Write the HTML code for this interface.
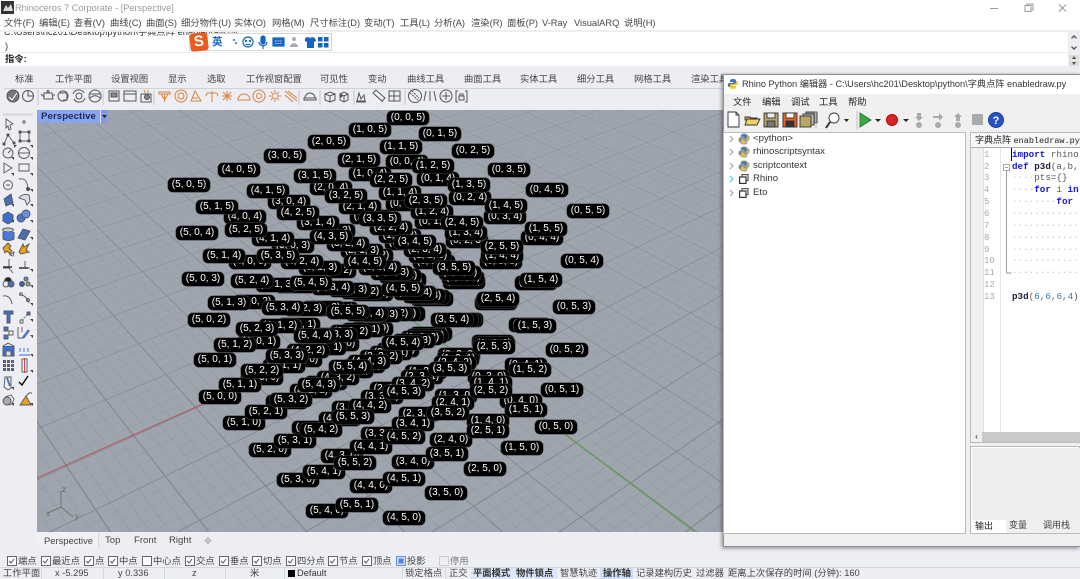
<!DOCTYPE html>
<html><head><meta charset="utf-8"><style>
html,body{margin:0;padding:0;width:1080px;height:579px;overflow:hidden}
body{position:relative;background:#eceef3;font-family:"Liberation Sans","Noto Sans CJK SC",sans-serif;color:#444}
#root{position:absolute;left:0;top:0;width:1080px;height:579px;overflow:hidden;contain:paint;filter:blur(.3px)}
.t{position:absolute;white-space:nowrap;font-size:9.3px;line-height:12px}
.t.st{line-height:11px}
.abs{position:absolute}
#vp{position:absolute;left:0;top:0;width:1080px;height:579px;clip-path:inset(110px 0 47px 37px);background:#9fa5ae;overflow:hidden}
#grid{position:absolute;left:-2200px;top:-3000px;width:3200px;height:3400px;transform-origin:2200px 3000px;
transform:matrix3d(-.4198,.07233,0,-.0002356,.1379,.0982,0,-.0002985,0,0,1,0,404,314,0,1) translate(200px,1000px);
background-image:linear-gradient(90deg,#80858d 0,#80858d 2px,transparent 2px),linear-gradient(#80858d 0,#80858d 2px,transparent 2px),linear-gradient(90deg,#8f949c 0,#8f949c 1.4px,transparent 1.4px),linear-gradient(#8f949c 0,#8f949c 1.4px,transparent 1.4px);
background-size:139px 139px,139px 139px,27.8px 27.8px,27.8px 27.8px;
background-position:54px 54px,54px 54px,26.2px 26.2px,26.2px 26.2px}
#vp b{position:absolute;width:42px;height:14px;margin:-7px 0 0 -21px;background:#000;border-radius:5px;color:#fff;font:400 10px/14px "Liberation Sans",sans-serif;text-align:center;white-space:nowrap;box-shadow:0 0 0 .5px #444}
.cb{position:absolute;top:556px;width:8px;height:8px;border:1px solid #666;background:#fff}
.code{position:absolute;left:1012px;font:9.25px/12px "Liberation Mono",monospace;color:#555;white-space:pre}
.code i{font-style:normal;color:#c3c3c3}.code u{text-decoration:none;color:#1515e0;font-weight:bold}
.ln{position:absolute;left:984px;font:9px/12px "Liberation Mono",monospace;color:#aaa}
</style></head><body><div id="root">

<div class="abs" style="left:0;top:0;width:1080px;height:30px;background:#fff"></div>
<svg class="abs" style="left:1px;top:1px" width="14" height="14"><rect width="13" height="13" fill="#333"/><path d="M2 10l3-6 2 3 3-4 2 7z" fill="#ddd"/></svg>
<div class="t" style="left:15px;top:2px;color:#9a9a9a;font-size:9.2px">Rhinoceros 7 Corporate - [Perspective]</div>
<svg class="abs" style="left:990px;top:3px" width="85" height="12" fill="none" stroke="#999"><path d="M0 5.500h8"/><rect x="35" y="2.500" width="6" height="6"/><path d="M37 2.500v-1.500h6v6h-2M69 1.500l7 7M76 1.500l-7 7"/></svg>
<div class="t" style="left:4px;top:17px">文件(F)</div><div class="t" style="left:39px;top:17px">编辑(E)</div><div class="t" style="left:74px;top:17px">查看(V)</div><div class="t" style="left:110px;top:17px">曲线(C)</div><div class="t" style="left:146px;top:17px">曲面(S)</div><div class="t" style="left:181px;top:17px">细分物件(U)</div><div class="t" style="left:234px;top:17px">实体(O)</div><div class="t" style="left:272px;top:17px">网格(M)</div><div class="t" style="left:310px;top:17px">尺寸标注(D)</div><div class="t" style="left:364px;top:17px">变动(T)</div><div class="t" style="left:400px;top:17px">工具(L)</div><div class="t" style="left:434px;top:17px">分析(A)</div><div class="t" style="left:471px;top:17px">渲染(R)</div><div class="t" style="left:507px;top:17px">面板(P)</div><div class="t" style="left:542px;top:17px">V-Ray</div><div class="t" style="left:574px;top:17px">VisualARQ</div><div class="t" style="left:624px;top:17px">说明(H)</div>

<div class="abs" style="left:0;top:30px;width:1080px;height:2px;background:#eceef3"></div>
<div class="abs" style="left:0;top:32px;width:1068px;height:20px;background:#fff;overflow:hidden"><div class="t" style="left:4px;top:-6px;color:#333">C:\Users\hc201\Desktop\python\字典点阵 enabledraw.py</div><div class="t" style="left:5px;top:8px;color:#333">)</div></div>
<div class="abs" style="left:0;top:53px;width:1068px;height:13px;background:#fff"></div>
<div class="t" style="left:5px;top:53px;color:#222;font-weight:bold">指令:</div>
<svg class="abs" style="left:1068px;top:32px" width="12" height="36" fill="#555"><path d="M3 6l3-3 3 3-1 .8L6 5 4 6.800zM3 15l1-.8 2 1.800 2-1.800 1 .8-3 3z"/><rect x="1" y="23" width="10" height="5" fill="#ddd"/><rect x="1" y="29" width="10" height="5" fill="#ddd"/><path d="M4 27l2-3 2 3zM4 30l2 3 2-3z"/></svg>

<div class="abs" style="left:4px;top:88px;width:720px;height:1px;background:#cfd2d8"></div>
<div class="t" style="left:15px;top:73px">标准</div><div class="t" style="left:55px;top:73px">工作平面</div><div class="t" style="left:111px;top:73px">设置视图</div><div class="t" style="left:168px;top:73px">显示</div><div class="t" style="left:207px;top:73px">选取</div><div class="t" style="left:246px;top:73px">工作视窗配置</div><div class="t" style="left:320px;top:73px">可见性</div><div class="t" style="left:368px;top:73px">变动</div><div class="t" style="left:407px;top:73px">曲线工具</div><div class="t" style="left:464px;top:73px">曲面工具</div><div class="t" style="left:520px;top:73px">实体工具</div><div class="t" style="left:577px;top:73px">细分工具</div><div class="t" style="left:634px;top:73px">网格工具</div><div class="t" style="left:691px;top:73px">渲染工具</div>

<svg class="abs" style="left:0;top:88px" width="722" height="20" fill="none" stroke="#555" stroke-width="1">
<g stroke="#c4c7cd"><path d="M38 2v15M103 2v15M154 2v15M299 2v15M320 2v15M354 2v15M405 2v15"/></g>
<circle cx="13" cy="8" r="6" fill="#777"/><path d="M9 9l3 3 5-7" stroke="#fff"/>
<circle cx="28" cy="8" r="5.500"/><path d="M28 3v5h5"/>
<path d="M44 5h8l1 6h-9zM41 6l3 3M53 7h2"/><circle cx="48" cy="3.500" r="1"/>
<circle cx="63" cy="8" r="5"/><path d="M60 5h7v7h-4"/>
<circle cx="79" cy="8" r="3"/><path d="M73 6a6 6 0 0 1 11-1M85 10a6 6 0 0 1-11 1"/>
<circle cx="95" cy="8" r="6"/><path d="M90 6h10M90 10c3-3 7-3 10 0"/>
<rect x="109" y="3" width="10" height="10"/><rect x="111" y="5" width="6" height="4" fill="#888"/>
<rect x="124" y="3" width="12" height="10"/><path d="M124 6h12"/>
<rect x="141" y="6" width="10" height="8"/><circle cx="147" cy="9" r="2.500" fill="#888"/><path d="M148 2v3M144 2l1 3" stroke="#d8823a"/>
<g stroke="#d8823a"><path d="M159 4h11v2h-11zM164.500 6v8M161 6l3 5M168 6l-3 5"/><circle cx="181" cy="8" r="6"/><circle cx="181" cy="8" r="3"/><path d="M191 13l4-10 6 10zM192 10h6"/><path d="M207 5h10M212 3v11M207 5l-1 3M217 5l1 3"/><path d="M222 8h10M227 3v10M223 4l8 8M231 4l-8 8"/><path d="M238 12a6 6 0 0 1 12 0zM238 12h12"/><circle cx="259" cy="8" r="6"/><circle cx="259" cy="8" r="2.500"/><circle cx="275" cy="8" r="3"/><path d="M275 2v2M275 12v2M269 8h2M279 8h2M271 4l1 1M279 12l-1-1M279 4l-1 1M271 12l1-1"/><path d="M285 3l12 10M288 3l9 7M285 7l8 7"/></g>
<path d="M305 10a5 5 0 0 1 10 0zM304 10h12v2h-12z"/>
<path d="M325 6l5-2 5 2v6l-5 2-5-2zM325 6l5 2 5-2M330 8v6"/><path d="M340 6l4-2 4 2v6l-4 2-4-2zM340 6l4 2 4-2M344 8v6" /><circle cx="341" cy="8" r="1" fill="#555"/>
<path d="M357 13l2-8 2 6 3-4 1 6zM356 14h10"/><path d="M373 5l3-3 9 8-3 3zM375 7l8 7"/><rect x="389" y="3" width="11" height="10"/><path d="M394 3v10M389 8h11"/>
<circle cx="415" cy="8" r="6.500"/><path d="M410 5l8 7M412 3l7 7" stroke-dasharray="2 1"/><path d="M426 3l-2 10M430 3v10M434 3l2 10"/><circle cx="446" cy="8" r="6"/><path d="M442 8h8M446 4v8"/><path d="M458 3h-2v11h2M465 3h2v11h-2"/><rect x="459" y="8" width="5" height="4"/><path d="M460 8v-2h3v2"/>
</svg>

<div id="vp"><div id="grid"></div>
<svg class="abs" style="left:0;top:0" width="1080" height="579" fill="none"><path d="M37 478L404 314" stroke="#b5585c" stroke-width="1"/><path d="M404 314L695 532" stroke="#5aa04a" stroke-width="1"/><path d="M61 491V507M61 507L48 513M61 507L73 517" stroke="#666" stroke-width=".8"/><text x="62" y="492" font-size="8" fill="#666" font-family="Liberation Sans">z</text><text x="46" y="516" font-size="8" fill="#666" font-family="Liberation Sans">x</text><text x="75" y="519" font-size="8" fill="#666" font-family="Liberation Sans">y</text></svg>
<b style="left:404px;top:314px">(0, 0, 0)</b><b style="left:405px;top:280px">(0, 0, 1)</b><b style="left:406px;top:243px">(0, 0, 2)</b><b style="left:407px;top:204px">(0, 0, 3)</b><b style="left:407px;top:162px">(0, 0, 4)</b><b style="left:408px;top:118px">(0, 0, 5)</b>
<b style="left:431px;top:334px">(0, 1, 0)</b><b style="left:432px;top:299px">(0, 1, 1)</b><b style="left:434px;top:262px">(0, 1, 2)</b><b style="left:436px;top:222px">(0, 1, 3)</b><b style="left:438px;top:179px">(0, 1, 4)</b><b style="left:440px;top:134px">(0, 1, 5)</b>
<b style="left:459px;top:355px">(0, 2, 0)</b><b style="left:462px;top:320px">(0, 2, 1)</b><b style="left:464px;top:282px">(0, 2, 2)</b><b style="left:467px;top:241px">(0, 2, 3)</b><b style="left:470px;top:198px">(0, 2, 4)</b><b style="left:473px;top:151px">(0, 2, 5)</b>
<b style="left:489px;top:377px">(0, 3, 0)</b><b style="left:493px;top:342px">(0, 3, 1)</b><b style="left:496px;top:303px">(0, 3, 2)</b><b style="left:501px;top:262px">(0, 3, 3)</b><b style="left:505px;top:217px">(0, 3, 4)</b><b style="left:509px;top:170px">(0, 3, 5)</b>
<b style="left:521px;top:401px">(0, 4, 0)</b><b style="left:526px;top:365px">(0, 4, 1)</b><b style="left:530px;top:325px">(0, 4, 2)</b><b style="left:536px;top:283px">(0, 4, 3)</b><b style="left:542px;top:238px">(0, 4, 4)</b><b style="left:547px;top:190px">(0, 4, 5)</b>
<b style="left:556px;top:427px">(0, 5, 0)</b><b style="left:562px;top:390px">(0, 5, 1)</b><b style="left:567px;top:350px">(0, 5, 2)</b><b style="left:574px;top:307px">(0, 5, 3)</b><b style="left:582px;top:261px">(0, 5, 4)</b><b style="left:588px;top:211px">(0, 5, 5)</b>
<b style="left:372px;top:329px">(1, 0, 0)</b><b style="left:372px;top:294px">(1, 0, 1)</b><b style="left:372px;top:256px">(1, 0, 2)</b><b style="left:371px;top:217px">(1, 0, 3)</b><b style="left:370px;top:174px">(1, 0, 4)</b><b style="left:370px;top:130px">(1, 0, 5)</b>
<b style="left:398px;top:350px">(1, 1, 0)</b><b style="left:399px;top:314px">(1, 1, 1)</b><b style="left:400px;top:276px">(1, 1, 2)</b><b style="left:400px;top:236px">(1, 1, 3)</b><b style="left:400px;top:193px">(1, 1, 4)</b><b style="left:401px;top:147px">(1, 1, 5)</b>
<b style="left:426px;top:372px">(1, 2, 0)</b><b style="left:427px;top:336px">(1, 2, 1)</b><b style="left:429px;top:297px">(1, 2, 2)</b><b style="left:430px;top:256px">(1, 2, 3)</b><b style="left:432px;top:212px">(1, 2, 4)</b><b style="left:433px;top:166px">(1, 2, 5)</b>
<b style="left:456px;top:396px">(1, 3, 0)</b><b style="left:458px;top:359px">(1, 3, 1)</b><b style="left:460px;top:320px">(1, 3, 2)</b><b style="left:463px;top:278px">(1, 3, 3)</b><b style="left:466px;top:233px">(1, 3, 4)</b><b style="left:469px;top:185px">(1, 3, 5)</b>
<b style="left:488px;top:421px">(1, 4, 0)</b><b style="left:491px;top:383px">(1, 4, 1)</b><b style="left:494px;top:344px">(1, 4, 2)</b><b style="left:497px;top:301px">(1, 4, 3)</b><b style="left:502px;top:256px">(1, 4, 4)</b><b style="left:506px;top:206px">(1, 4, 5)</b>
<b style="left:522px;top:448px">(1, 5, 0)</b><b style="left:526px;top:410px">(1, 5, 1)</b><b style="left:530px;top:370px">(1, 5, 2)</b><b style="left:535px;top:326px">(1, 5, 3)</b><b style="left:541px;top:280px">(1, 5, 4)</b><b style="left:546px;top:229px">(1, 5, 5)</b>
<b style="left:338px;top:344px">(2, 0, 0)</b><b style="left:337px;top:309px">(2, 0, 1)</b><b style="left:335px;top:271px">(2, 0, 2)</b><b style="left:334px;top:231px">(2, 0, 3)</b><b style="left:331px;top:188px">(2, 0, 4)</b><b style="left:329px;top:142px">(2, 0, 5)</b>
<b style="left:364px;top:366px">(2, 1, 0)</b><b style="left:363px;top:330px">(2, 1, 1)</b><b style="left:362px;top:292px">(2, 1, 2)</b><b style="left:362px;top:251px">(2, 1, 3)</b><b style="left:360px;top:207px">(2, 1, 4)</b><b style="left:359px;top:160px">(2, 1, 5)</b>
<b style="left:391px;top:389px">(2, 2, 0)</b><b style="left:391px;top:353px">(2, 2, 1)</b><b style="left:391px;top:314px">(2, 2, 2)</b><b style="left:392px;top:273px">(2, 2, 3)</b><b style="left:391px;top:228px">(2, 2, 4)</b><b style="left:391px;top:180px">(2, 2, 5)</b>
<b style="left:420px;top:414px">(2, 3, 0)</b><b style="left:422px;top:377px">(2, 3, 1)</b><b style="left:422px;top:338px">(2, 3, 2)</b><b style="left:424px;top:296px">(2, 3, 3)</b><b style="left:425px;top:250px">(2, 3, 4)</b><b style="left:426px;top:201px">(2, 3, 5)</b>
<b style="left:451px;top:440px">(2, 4, 0)</b><b style="left:453px;top:403px">(2, 4, 1)</b><b style="left:455px;top:363px">(2, 4, 2)</b><b style="left:457px;top:320px">(2, 4, 3)</b><b style="left:460px;top:273px">(2, 4, 4)</b><b style="left:462px;top:223px">(2, 4, 5)</b>
<b style="left:485px;top:469px">(2, 5, 0)</b><b style="left:488px;top:431px">(2, 5, 1)</b><b style="left:491px;top:391px">(2, 5, 2)</b><b style="left:494px;top:347px">(2, 5, 3)</b><b style="left:498px;top:299px">(2, 5, 4)</b><b style="left:502px;top:247px">(2, 5, 5)</b>
<b style="left:301px;top:360px">(3, 0, 0)</b><b style="left:299px;top:325px">(3, 0, 1)</b><b style="left:296px;top:286px">(3, 0, 2)</b><b style="left:293px;top:246px">(3, 0, 3)</b><b style="left:289px;top:202px">(3, 0, 4)</b><b style="left:285px;top:156px">(3, 0, 5)</b>
<b style="left:326px;top:383px">(3, 1, 0)</b><b style="left:325px;top:348px">(3, 1, 1)</b><b style="left:323px;top:308px">(3, 1, 2)</b><b style="left:320px;top:268px">(3, 1, 3)</b><b style="left:318px;top:223px">(3, 1, 4)</b><b style="left:315px;top:176px">(3, 1, 5)</b>
<b style="left:353px;top:408px">(3, 2, 0)</b><b style="left:352px;top:371px">(3, 2, 1)</b><b style="left:351px;top:332px">(3, 2, 2)</b><b style="left:350px;top:290px">(3, 2, 3)</b><b style="left:348px;top:244px">(3, 2, 4)</b><b style="left:346px;top:196px">(3, 2, 5)</b>
<b style="left:382px;top:434px">(3, 3, 0)</b><b style="left:382px;top:397px">(3, 3, 1)</b><b style="left:381px;top:357px">(3, 3, 2)</b><b style="left:381px;top:315px">(3, 3, 3)</b><b style="left:380px;top:268px">(3, 3, 4)</b><b style="left:380px;top:219px">(3, 3, 5)</b>
<b style="left:413px;top:462px">(3, 4, 0)</b><b style="left:413px;top:424px">(3, 4, 1)</b><b style="left:413px;top:384px">(3, 4, 2)</b><b style="left:414px;top:341px">(3, 4, 3)</b><b style="left:415px;top:293px">(3, 4, 4)</b><b style="left:415px;top:242px">(3, 4, 5)</b>
<b style="left:446px;top:493px">(3, 5, 0)</b><b style="left:447px;top:454px">(3, 5, 1)</b><b style="left:448px;top:413px">(3, 5, 2)</b><b style="left:450px;top:369px">(3, 5, 3)</b><b style="left:452px;top:320px">(3, 5, 4)</b><b style="left:454px;top:268px">(3, 5, 5)</b>
<b style="left:262px;top:378px">(4, 0, 0)</b><b style="left:259px;top:342px">(4, 0, 1)</b><b style="left:254px;top:302px">(4, 0, 2)</b><b style="left:250px;top:262px">(4, 0, 3)</b><b style="left:245px;top:217px">(4, 0, 4)</b><b style="left:239px;top:170px">(4, 0, 5)</b>
<b style="left:287px;top:402px">(4, 1, 0)</b><b style="left:284px;top:366px">(4, 1, 1)</b><b style="left:280px;top:326px">(4, 1, 2)</b><b style="left:277px;top:285px">(4, 1, 3)</b><b style="left:273px;top:239px">(4, 1, 4)</b><b style="left:268px;top:191px">(4, 1, 5)</b>
<b style="left:313px;top:428px">(4, 2, 0)</b><b style="left:311px;top:391px">(4, 2, 1)</b><b style="left:308px;top:351px">(4, 2, 2)</b><b style="left:305px;top:309px">(4, 2, 3)</b><b style="left:302px;top:262px">(4, 2, 4)</b><b style="left:298px;top:213px">(4, 2, 5)</b>
<b style="left:342px;top:456px">(4, 3, 0)</b><b style="left:340px;top:419px">(4, 3, 1)</b><b style="left:338px;top:378px">(4, 3, 2)</b><b style="left:336px;top:335px">(4, 3, 3)</b><b style="left:333px;top:288px">(4, 3, 4)</b><b style="left:331px;top:237px">(4, 3, 5)</b>
<b style="left:371px;top:486px">(4, 4, 0)</b><b style="left:371px;top:447px">(4, 4, 1)</b><b style="left:370px;top:406px">(4, 4, 2)</b><b style="left:369px;top:362px">(4, 4, 3)</b><b style="left:367px;top:314px">(4, 4, 4)</b><b style="left:365px;top:262px">(4, 4, 5)</b>
<b style="left:404px;top:518px">(4, 5, 0)</b><b style="left:404px;top:479px">(4, 5, 1)</b><b style="left:404px;top:437px">(4, 5, 2)</b><b style="left:404px;top:392px">(4, 5, 3)</b><b style="left:403px;top:343px">(4, 5, 4)</b><b style="left:403px;top:289px">(4, 5, 5)</b>
<b style="left:220px;top:397px">(5, 0, 0)</b><b style="left:215px;top:360px">(5, 0, 1)</b><b style="left:209px;top:320px">(5, 0, 2)</b><b style="left:203px;top:279px">(5, 0, 3)</b><b style="left:197px;top:233px">(5, 0, 4)</b><b style="left:189px;top:185px">(5, 0, 5)</b>
<b style="left:244px;top:423px">(5, 1, 0)</b><b style="left:240px;top:385px">(5, 1, 1)</b><b style="left:235px;top:345px">(5, 1, 2)</b><b style="left:229px;top:303px">(5, 1, 3)</b><b style="left:224px;top:256px">(5, 1, 4)</b><b style="left:217px;top:207px">(5, 1, 5)</b>
<b style="left:270px;top:450px">(5, 2, 0)</b><b style="left:266px;top:412px">(5, 2, 1)</b><b style="left:262px;top:371px">(5, 2, 2)</b><b style="left:257px;top:329px">(5, 2, 3)</b><b style="left:252px;top:281px">(5, 2, 4)</b><b style="left:246px;top:230px">(5, 2, 5)</b>
<b style="left:298px;top:480px">(5, 3, 0)</b><b style="left:295px;top:441px">(5, 3, 1)</b><b style="left:291px;top:400px">(5, 3, 2)</b><b style="left:287px;top:356px">(5, 3, 3)</b><b style="left:283px;top:308px">(5, 3, 4)</b><b style="left:278px;top:256px">(5, 3, 5)</b>
<b style="left:327px;top:511px">(5, 4, 0)</b><b style="left:324px;top:472px">(5, 4, 1)</b><b style="left:321px;top:430px">(5, 4, 2)</b><b style="left:319px;top:385px">(5, 4, 3)</b><b style="left:315px;top:336px">(5, 4, 4)</b><b style="left:311px;top:283px">(5, 4, 5)</b>
<b style="left:357px;top:505px">(5, 5, 1)</b><b style="left:355px;top:463px">(5, 5, 2)</b><b style="left:353px;top:417px">(5, 5, 3)</b><b style="left:350px;top:367px">(5, 5, 4)</b><b style="left:348px;top:312px">(5, 5, 5)</b>
<div class="abs" style="left:37px;top:110px;width:63px;height:13px;background:#8ba4ee;color:#1c2a55;font-size:9.6px;line-height:13px;text-align:center;font-weight:bold;letter-spacing:.1px">Perspective</div>
<div class="abs" style="left:100px;top:110px;width:7px;height:13px;background:#7f97e4;border-left:1px solid #dfe5fa;box-sizing:border-box"><svg class="abs" style="left:1px;top:5px" width="5" height="3"><path d="M0 0h5l-2.500 3z" fill="#223"/></svg></div>
</div>

<!-- left toolbars -->
<svg class="abs" style="left:0;top:108px" width="37" height="300" fill="none" stroke="#555" stroke-width=".9">
<path d="M3 6.500h30" stroke="#d5d7dc" stroke-width="2"/>
<path d="M6 11l7 5-3 1 1 4-2 1-1-4-2 2z" fill="#eee"/><circle cx="24" cy="14" r="1.200"/>
<path d="M4 36l4-9 6 8M20 24h9M20 33h9M20 24v9M29 24v9"/><g fill="#444"><rect x="3" y="35" width="2" height="2"/><rect x="7" y="26" width="2" height="2"/><rect x="13" y="34" width="2" height="2"/><rect x="19" y="23" width="2" height="2"/><rect x="28" y="23" width="2" height="2"/><rect x="28" y="32" width="2" height="2"/><rect x="19" y="32" width="2" height="2"/></g>
<circle cx="8" cy="45" r="5"/><path d="M8 45l3-3"/><circle cx="24" cy="45" r="5.500"/><path d="M18 45h12"/>
<path d="M4 55v10l8-5zM19 56h10v7h-10z"/>
<circle cx="8" cy="77" r="4.500"/><path d="M6 77h4M19 71c6-1 8 2 9 9"/><circle cx="28" cy="81" r="1.500" fill="#444"/>
<path d="M4 91l7-5 2 9-7 3z" fill="#4a6db8"/><path d="M19 90c3-4 7-4 10-3l1 6-3 4-2-5z" fill="#d7dcef"/>
<path d="M3 107l5-3 5 3v6l-5 3-5-3z" fill="#3d6fd0"/><circle cx="21" cy="110" r="4" fill="#4a74cf"/><circle cx="26" cy="106" r="4" fill="#6b8ee0"/>
<ellipse cx="8" cy="122" rx="5.500" ry="2" fill="#bcd"/><path d="M3 124v7c3 2 8 2 11 0v-7" fill="#4a78d8"/><path d="M18 130l5-9 7 2-5 9z" fill="#4a6db8"/>
<path d="M3 140l5-5 3 3-2 2 3 3-2 3-3-3-2 2z" fill="#e8a020"/><path d="M10 147l4-3-1 4z" fill="#fff"/><path d="M19 144l4-8 1 3 5-3-3 6 3 2-8 2z" fill="#f0a010"/>
<path d="M3 160h7M9 151v9l4 5" /><path d="M3 159h9" stroke="#333" stroke-width="1.500"/><path d="M20 160h10M25 153v7" /><path d="M19 160h9" stroke="#333" stroke-width="1.500"/>
<circle cx="8" cy="173" r="3.500" fill="#222"/><circle cx="6" cy="176" r="3" fill="#eee"/><circle cx="11" cy="176" r="3" fill="#4a6db8"/><circle cx="26" cy="171" r="2" fill="#6a84c8"/><circle cx="22" cy="176" r="2.500" fill="#3d5fa8"/><circle cx="28" cy="176" r="2" fill="#8aa"/>
<path d="M3 188c5-1 8 2 9 8"/><path d="M19 187c5-1 9 4 10 8"/><circle cx="21" cy="186" r="1.300"/><circle cx="28" cy="192" r="1.500"/>
<path d="M4 203h9v3h-3v9h-3v-9h-3z" fill="#3d6fd0"/><rect x="20" y="212" width="3" height="3"/><rect x="27" y="204" width="3" height="3" fill="#4a74cf"/><path d="M22 212l6-6" stroke-dasharray="1.500 1"/>
<rect x="4" y="219" width="4" height="4" fill="#4a74cf"/><rect x="9" y="223" width="4" height="4"/><rect x="4" y="227" width="4" height="4" fill="#4a74cf"/><path d="M18 219v11h5M22 219v5"/><path d="M23 230l6-8" stroke="#4a74cf" stroke-width="2.500"/>
<rect x="3" y="238" width="11" height="10" fill="#3d6fd0"/><path d="M3 238l5-3 6 3" fill="#cde"/><rect x="6" y="243" width="5" height="5" fill="#ddd"/><path d="M19 247h11M20 244v-4M24 244v-4M28 244v-4" stroke="#3d6fd0"/>
<g fill="#55617a" stroke="none"><rect x="3" y="252" width="3" height="3"/><rect x="7" y="252" width="3" height="3"/><rect x="11" y="252" width="3" height="3"/><rect x="3" y="256" width="3" height="3"/><rect x="7" y="256" width="3" height="3"/><rect x="11" y="256" width="3" height="3"/><rect x="3" y="260" width="3" height="3"/><rect x="7" y="260" width="3" height="3"/><rect x="11" y="260" width="3" height="3"/></g><rect x="22" y="251" width="5" height="13"/><path d="M24.500 250v15" stroke="#c33"/>
<path d="M5 269l6 0v11l-3 2-4-3z"/><path d="M7 270l3 8" stroke="#4a74cf" stroke-width="2"/><path d="M19 274l3 3 6-9" stroke="#111" stroke-width="1.500"/>
<circle cx="7" cy="293" r="4" fill="#aaa"/><path d="M5 289l6-2 3 4-2 5-4 1" /><path d="M20 297l6-9 5 9z" fill="#e8a020"/><path d="M26 288l3-3h3" />
</svg>
<svg class="abs" style="left:0;top:108px" width="37" height="300" fill="#444"><path d="M14 40v-3h3zM33 40v-3h-3M14 52v-3h-3zM33 52v-3h-3zM14 68v-3h-3zM33 68v-3h-3zM33 84v-3h-3zM14 99v-3h-3zM33 99v-3h-3zM14 115v-3h-3zM33 115v-3h-3zM33 132v-3h-3zM33 164v-3h-3zM33 180v-3h-3zM33 198v-3h-3zM33 214v-3h-3zM33 230v-3h-3zM33 249v-3h-3zM33 265v-3h-3zM14 282v-3h-3zM14 298v-3h-3zM33 298v-3h-3z"/></svg>

<!-- sogou -->
<div class="abs" style="left:189px;top:33px;width:143px;height:18px;background:#fff;border:1px solid #d5d5d5;box-sizing:border-box"></div>
<div class="abs" style="left:190px;top:33px;width:18px;height:18px;background:#ec5a1e;border-radius:3px;transform:rotate(-6deg);color:#fff;font:bold 15px/18px 'Liberation Sans';text-align:center">S</div>
<div class="t" style="left:212px;top:36px;color:#1565c0;font-size:10.500px;font-weight:bold">英</div>
<svg class="abs" style="left:225px;top:33px" width="107" height="18" fill="none" stroke="#1565c0" stroke-width="1.200">
<path d="M8 7h2M11 9v2" stroke-width="1.500"/><circle cx="23" cy="9" r="5"/><circle cx="21" cy="8" r=".6"/><circle cx="25" cy="8" r=".6"/><path d="M21 11c1 1 3 1 4 0"/>
<rect x="36" y="3" width="4" height="8" rx="2" fill="#1565c0"/><path d="M34 9c0 5 8 5 8 0M38 13v3"/>
<rect x="48" y="5" width="11" height="8" fill="#1565c0"/><path d="M50 8h7M50 10.500h7" stroke="#fff" stroke-width=".8" stroke-dasharray="1 .6"/>
<circle cx="69" cy="6" r="2" fill="#aab" stroke="none"/><path d="M65 14c0-5 8-5 8 0z" fill="#aab" stroke="none"/>
<path d="M80 5l3-1 2 1 2-1 3 1 1 3-2 1v6h-7v-6l-2-1z" fill="#1565c0" stroke="none"/>
<g fill="#1565c0" stroke="none"><rect x="93" y="4" width="4.500" height="4.500"/><rect x="99" y="4" width="4.500" height="4.500"/><rect x="93" y="10" width="4.500" height="4.500"/><rect x="99" y="10" width="4.500" height="4.500"/></g></svg>

<!-- bottom tabs -->
<div class="abs" style="left:37px;top:532px;width:61px;height:16px;background:#f0f1f5;border-right:1px solid #d5d7dc"></div>
<div class="t" style="left:44px;top:535px;font-size:9.4px">Perspective</div><div class="t" style="left:105px;top:535px;font-size:9.6px">Top</div><div class="t" style="left:134px;top:535px;font-size:9.6px">Front</div><div class="t" style="left:169px;top:535px;font-size:9.6px">Right</div><div class="t" style="left:204px;top:535px;color:#aaa">✥</div>

<!-- osnaps -->
<div class="cb" style="left:7px"></div><div class="t" style="left:18px;top:555px">端点</div>
<div class="cb" style="left:41px"></div><div class="t" style="left:52px;top:555px">最近点</div>
<div class="cb" style="left:84px"></div><div class="t" style="left:95px;top:555px">点</div>
<div class="cb" style="left:108px"></div><div class="t" style="left:119px;top:555px">中点</div>
<div class="cb" style="left:142px"></div><div class="t" style="left:153px;top:555px">中心点</div>
<div class="cb" style="left:185px"></div><div class="t" style="left:196px;top:555px">交点</div>
<div class="cb" style="left:219px"></div><div class="t" style="left:230px;top:555px">垂点</div>
<div class="cb" style="left:252px"></div><div class="t" style="left:263px;top:555px">切点</div>
<div class="cb" style="left:286px"></div><div class="t" style="left:297px;top:555px">四分点</div>
<div class="cb" style="left:328px"></div><div class="t" style="left:339px;top:555px">节点</div>
<div class="cb" style="left:362px"></div><div class="t" style="left:373px;top:555px">顶点</div>
<div class="cb" style="left:396px;background:#5b84d6;box-shadow:inset 0 0 0 1.500px #cfdcf5;border-color:#6a8fd8"></div><div class="t" style="left:407px;top:555px">投影</div>
<div class="cb" style="left:439px;background:#eee;border-color:#ccc"></div><div class="t" style="left:450px;top:555px;color:#777">停用</div>
<svg class="abs" style="left:0;top:556px" width="400" height="10" fill="none" stroke="#555"><path d="M9 5l2 2 3-4M43 5l2 2 3-4M86 5l2 2 3-4M110 5l2 2 3-4M187 5l2 2 3-4M221 5l2 2 3-4M254 5l2 2 3-4M288 5l2 2 3-4M330 5l2 2 3-4M364 5l2 2 3-4"/></svg>

<!-- status -->
<div class="abs" style="left:0;top:567px;width:1080px;height:1px;background:#d5d8df"></div>
<div class="abs" style="left:41px;top:568px;width:1px;height:11px;background:#d5d8df;box-shadow:62px 0 #d5d8df,123px 0 #d5d8df,184px 0 #d5d8df,243px 0 #d5d8df,361px 0 #d5d8df,404px 0 #d5d8df"></div>
<div class="abs" style="left:471px;top:568px;width:42px;height:11px;background:#dbe4f6"></div>
<div class="abs" style="left:514px;top:568px;width:43px;height:11px;background:#dbe4f6"></div>
<div class="abs" style="left:600px;top:568px;width:33px;height:11px;background:#cfdcf5"></div>
<div class="t st" style="left:3px;top:568px">工作平面</div><div class="t st" style="left:55px;top:568px">x -5.295</div><div class="t st" style="left:118px;top:568px">y 0.336</div><div class="t st" style="left:192px;top:568px">z</div><div class="t st" style="left:250px;top:568px">米</div>
<div class="abs" style="left:288px;top:570px;width:7px;height:7px;background:#000"></div><div class="t st" style="left:297px;top:568px;color:#333">Default</div>
<div class="t st" style="left:405px;top:568px">锁定格点</div><div class="t st" style="left:449px;top:568px">正交</div><div class="t st" style="left:473px;top:568px;font-weight:bold;color:#333">平面模式</div><div class="t st" style="left:516px;top:568px;font-weight:bold;color:#333">物件锁点</div><div class="t st" style="left:560px;top:568px">智慧轨迹</div><div class="t st" style="left:603px;top:568px;font-weight:bold;color:#333">操作轴</div><div class="t st" style="left:636px;top:568px">记录建构历史</div><div class="t st" style="left:696px;top:568px">过滤器</div><div class="t st" style="left:728px;top:568px">距离上次保存的时间 (分钟): 160</div>

<!-- python editor window -->
<div class="abs" style="left:723px;top:74px;width:357px;height:473px;background:#f0f0f0;border:1px solid #8f8f8f;border-right:0;box-sizing:border-box;box-shadow:-1px 1px 4px rgba(0,0,0,.45)"></div>
<div class="abs" style="left:724px;top:75px;width:356px;height:19px;background:#fff"></div>
<svg width="0" height="0" style="position:absolute"><defs><g id="py"><path d="M5 0C2 0 2 1.500 2 3h3v1H1C0 4 0 5.500 0 6s0 2 1 2h1V6.500C2 5.500 3 5 4 5h2c1 0 2-.5 2-1.500V1.500C8 .5 7 0 5 0z" fill="#3d78b0"/><path d="M5 10c3 0 3-1.500 3-3H5V6h4c1 0 1-1.500 1-2s0-2-1-2H8v1.500C8 4.500 7 5 6 5H4C3 5 2 5.500 2 6.500v2C2 9.500 3 10 5 10z" fill="#f2c930"/></g><g id="ns" fill="none" stroke="#555" stroke-width="1.200"><rect x="3" y="0.600" width="6" height="6"/><rect x="0.600" y="3" width="6.400" height="6.400" fill="#fff" stroke="#333"/></g></defs></svg>
<svg class="abs" style="left:728px;top:79px" width="11" height="11"><use href="#py"/></svg>
<div class="t" style="left:742px;top:78px;color:#333;font-size:9.2px">Rhino Python 编辑器 - C:\Users\hc201\Desktop\python\字典点阵 enabledraw.py</div>
<div class="t" style="left:733px;top:96px;color:#222">文件</div><div class="t" style="left:762px;top:96px;color:#222">编辑</div><div class="t" style="left:791px;top:96px;color:#222">调试</div><div class="t" style="left:819px;top:96px;color:#222">工具</div><div class="t" style="left:848px;top:96px;color:#222">帮助</div>
<svg class="abs" style="left:724px;top:110px" width="290" height="21" stroke="#333" stroke-width=".9">
<path d="M4 2h8l3 3v12H4z" fill="#fff"/><path d="M12 2v3h3" fill="none"/>
<path d="M21 7h5l1 1h6v2h-12z" fill="#e0b93a"/><path d="M21 15l2-6h13l-3 6z" fill="#f0d060"/>
<rect x="40" y="3" width="14" height="14" fill="#b8a868"/><rect x="43" y="3" width="8" height="5" fill="#eee"/><rect x="43" y="11" width="8" height="6" fill="#777"/>
<rect x="59" y="3" width="14" height="14" fill="#e8622a"/><rect x="62" y="3" width="8" height="5" fill="#fff"/><rect x="62" y="11" width="8" height="6" fill="#333"/>
<rect x="82" y="2" width="11" height="11" fill="#999"/><rect x="79" y="4" width="11" height="11" fill="#bbb"/><rect x="76" y="6" width="11" height="11" fill="#b8a868"/>
<path d="M92 1v18" stroke="#bbb"/><circle cx="110" cy="8" r="5" fill="#fff"/><path d="M106 12l-4 6" stroke-width="2"/><path d="M120 9h5l-2.500 3z" fill="#222" stroke="none"/>
<path d="M133 1v18" stroke="#bbb"/><path d="M136 3l11 7-11 7z" fill="#39a845" stroke="#2a7a30"/><path d="M151 9h6l-3 3z" fill="#222" stroke="none"/>
<circle cx="168" cy="10" r="5.500" fill="#d8222a" stroke="#a00"/><path d="M179 9h6l-3 3z" fill="#222" stroke="none"/>
<g fill="#aaa" stroke="none"><circle cx="195" cy="15" r="3"/><path d="M193 3h4v4h2l-4 4-4-4h2z"/><circle cx="214" cy="15" r="3"/><path d="M209 6h6V3l4 4-4 4V8h-6z"/><circle cx="234" cy="15" r="3"/><path d="M232 11V7h-2l4-4 4 4h-2v4z"/><rect x="248" y="4" width="11" height="11" rx="1"/></g>
<circle cx="272" cy="10" r="7.500" fill="#2a52c8" stroke="#1a3a90"/><text x="272" y="14" font-size="11" font-weight="bold" text-anchor="middle" fill="#fff" stroke="none" font-family="Liberation Sans">?</text>
</svg>
<div class="abs" style="left:723px;top:132px;width:243px;height:402px;background:#fff;border:1px solid #bbb;box-sizing:border-box"></div>
<svg class="abs" style="left:728px;top:133px" width="24" height="66" fill="none" stroke="#999"><path d="M2 3l3 3-3 3M2 16l3 3-3 3M2 30l3 3-3 3M2 57l3 3-3 3"/><path d="M2 43l3 3-3 3" stroke="#3ac0f0"/><use href="#py" x="11" y="1"/><use href="#py" x="11" y="14"/><use href="#py" x="11" y="28"/><use href="#ns" x="11" y="41"/><use href="#ns" x="11" y="55"/></svg>
<div class="t" style="left:753px;top:133px;font-size:9.6px;color:#333">&lt;python&gt;</div><div class="t" style="left:753px;top:146px;font-size:9.6px;color:#333">rhinoscriptsyntax</div><div class="t" style="left:753px;top:160px;font-size:9.6px;color:#333">scriptcontext</div><div class="t" style="left:753px;top:173px;font-size:9.6px;color:#333">Rhino</div><div class="t" style="left:753px;top:187px;font-size:9.6px;color:#333">Eto</div>

<div class="abs" style="left:970px;top:132px;width:110px;height:311px;background:#f5f5f5;border:1px solid #bbb;box-sizing:border-box"></div>
<div class="abs" style="left:971px;top:133px;width:109px;height:14px;background:#f7f7f7;border-bottom:1px solid #aaa"></div>
<div class="t" style="left:975px;top:134px;color:#222;font-size:9px;width:105px;overflow:hidden">字典点阵 <span style="font-family:'Liberation Mono',monospace;font-size:8.5px">enabledraw.py</span></div>
<div class="abs" style="left:971px;top:148px;width:109px;height:284px;background:#fff"></div>
<div class="abs" style="left:971px;top:148px;width:12px;height:284px;background:#f0f0f0;border-right:1px solid #ddd"></div>
<div class="abs" style="left:1000px;top:148px;width:1px;height:284px;background:#e5e5e5"></div>
<div class="abs" style="left:1011px;top:148px;width:1px;height:13px;background:#000"></div>
<svg class="abs" style="left:1003px;top:164px" width="12" height="112" fill="none" stroke="#aaa"><rect x=".5" y=".5" width="6" height="6" fill="#fff"/><path d="M2 3.500h3M3.500 7v102h5" stroke="#999"/></svg>
<div class="ln" style="top:149px">1</div><div class="ln" style="top:161px">2</div><div class="ln" style="top:172px">3</div><div class="ln" style="top:184px">4</div><div class="ln" style="top:196px">5</div><div class="ln" style="top:208px">6</div><div class="ln" style="top:220px">7</div><div class="ln" style="top:232px">8</div><div class="ln" style="top:244px">9</div><div class="ln" style="top:255px">10</div><div class="ln" style="top:267px">11</div><div class="ln" style="top:279px">12</div><div class="ln" style="top:291px">13</div>
<div class="code" style="top:149px"><u>import</u> rhino</div>
<div class="code" style="top:161px"><u>def</u> <b style="color:#224">p3d</b>(a,b,</div>
<div class="code" style="top:172px"><i>····</i>pts={}</div>
<div class="code" style="top:184px"><i>····</i><u>for</u> i <u>in</u></div>
<div class="code" style="top:196px"><i>········</i><u>for</u></div>
<div class="code" style="top:208px"><i>············</i></div><div class="code" style="top:220px"><i>············</i></div><div class="code" style="top:232px"><i>············</i></div><div class="code" style="top:244px"><i>············</i></div><div class="code" style="top:255px"><i>············</i></div><div class="code" style="top:267px"><i>············</i></div>
<div class="code" style="top:291px"><b style="color:#224">p3d</b>(<span style="color:#2a7ab0">6</span>,<span style="color:#2a7ab0">6</span>,<span style="color:#2a7ab0">6</span>,<span style="color:#2a7ab0">4</span>)</div>
<div class="abs" style="left:971px;top:432px;width:109px;height:10px;background:#c9c9c9"></div>
<div class="abs" style="left:971px;top:432px;width:11px;height:10px;background:#f0f0f0;color:#444;font:bold 8px/10px 'Liberation Sans';text-align:center">‹</div>
<div class="abs" style="left:970px;top:446px;width:110px;height:88px;background:#fff;border:1px solid #bbb;box-sizing:border-box"></div>
<div class="abs" style="left:972px;top:448px;width:108px;height:72px;background:#eee"></div>
<div class="abs" style="left:1006px;top:520px;width:74px;height:13px;background:#f0f0f0"></div>
<div class="t" style="left:975px;top:520px;color:#222;font-size:9px">输出</div><div class="t" style="left:1009px;top:519px;font-size:9px">变量</div><div class="t" style="left:1043px;top:519px;font-size:9px">调用栈</div>
</div></body></html>
